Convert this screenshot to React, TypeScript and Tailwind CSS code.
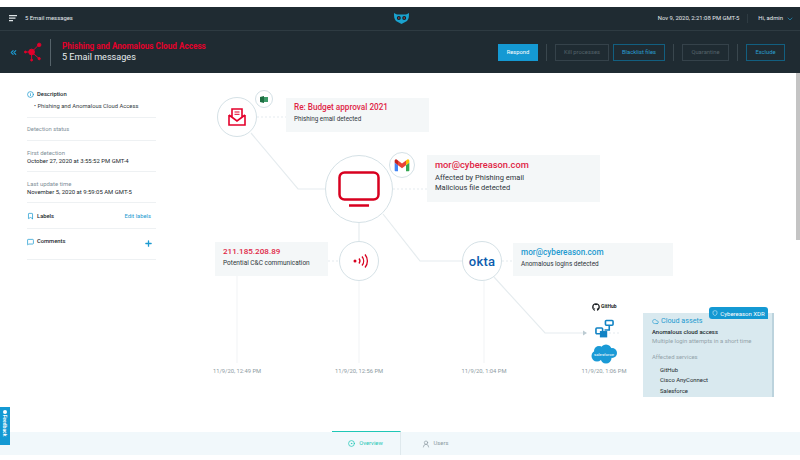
import { ChevronDown, ChevronsLeft, Cloud, Info, Plus, Shield, Bookmark, MessageSquare, UserRound, CircleDot } from "lucide-react";
import { FaGithub } from "react-icons/fa";

const Node = ({ x, y, r, children }: { x: number; y: number; r: number; children?: React.ReactNode }) => (
  <div
    className="absolute flex items-center justify-center rounded-full border-[1.5px] border-[#d5e1e6] bg-white"
    style={{ left: x - r, top: y - r, width: r * 2, height: r * 2 }}
  >
    {children}
  </div>
);

const Time = ({ x, label }: { x: number; label: string }) => (
  <span className="absolute top-[294px] w-[80px] -translate-x-1/2 text-center text-[5.8px] text-[#8c9aa1]" style={{ left: x }}>
    {label}
  </span>
);

const SideRow = ({ label, value }: { label: string; value: string }) => (
  <div className="h-[31px] border-b border-[#eef1f3] pt-[8px] text-[5.95px] leading-[8px]">
    <div className="text-[#7f9099]">{label}</div>
    <div className="text-[#22292e]">{value}</div>
  </div>
);

const Gmail = () => (
  <svg width="16" height="13" viewBox="0 0 24 19">
    <path d="M1 18V5l5 4v9H2a1 1 0 0 1-1-1z" fill="#4285f4" />
    <path d="M23 18V5l-5 4v9h4a1 1 0 0 0 1-1z" fill="#34a853" />
    <path d="M18 9V2l2-1.500a2 2 0 0 1 3 1.500v3z" fill="#fbbc04" />
    <path d="M6 9V2L4 .5a2 2 0 0 0-3 1.500v3z" fill="#c5221f" />
    <path d="M6 9V2l6 4.500L18 2v7l-6 4.500z" fill="#ea4335" />
  </svg>
);

export default function App() {
  return (
    <div className="flex h-[460px] w-[800px] flex-col overflow-hidden bg-white pt-[7px] font-['Roboto',sans-serif]">
      <header className="flex h-[24px] items-center border-b border-[#2e3b42] bg-[#1f2b32] pl-[9px] pr-[6px] text-[5.9px] text-[#e4e9ec]">
        <svg width="8" height="7" viewBox="0 0 8 7" fill="#dfe5e8">
          <path d="M0 0h8v1.300H0zM0 2.500h6.500v1.300H0zM0 5h4v1.300H0z" />
        </svg>
        <span className="ml-[8px]">5 Email messages</span>
        <svg className="ml-[321px]" width="15" height="11" viewBox="0 0 15 11">
          <path d="M0 0c2 1 3 1.500 4 1.500h7c1 0 2-.5 4-1.500 0 3 0 6-2 8l-5.500 3L2 8C0 6 0 3 0 0z" fill="#1aa3cf" />
          <circle cx="4.800" cy="5" r="2" fill="#12222c" />
          <circle cx="10.200" cy="5" r="2" fill="#12222c" />
          <circle cx="4.800" cy="5" r=".8" fill="#c9473f" />
          <circle cx="10.200" cy="5" r=".8" fill="#c9473f" />
        </svg>
        <span className="ml-auto">Nov 9, 2020, 2:21:08 PM GMT-5</span>
        <span className="ml-[8px] border-l border-[#2e3b42] pl-[10px]">Hi, admin</span>
        <ChevronDown className="ml-[3px] h-[8px] w-[8px] text-[#1d9ad0]" />
      </header>

      <div className="flex h-[42px] items-center bg-[#1f2b32] pl-[9px] pr-[15px]">
        <ChevronsLeft className="h-[9px] w-[9px] text-[#1d9ad0]" strokeWidth={3} />
        <svg className="ml-[6px]" width="19" height="20" viewBox="0 0 20 20" stroke="#e4002b" fill="#e4002b" strokeWidth="1">
          <path d="M8 10 1 10M8 10 15 3M8 10 8 19M8 10 16 17" />
          <circle cx="8" cy="10" r="3" />
          <circle cx="1.500" cy="10" r="1" />
          <circle cx="16" cy="2.500" r="1.800" />
          <circle cx="8" cy="18.500" r="1" />
          <circle cx="16" cy="17" r="1.200" />
        </svg>
        <div className="ml-[7px] h-[27px] w-px bg-[#56636a]" />
        <div className="ml-[11px] leading-[11px]">
          <div className="text-[8.2px] font-bold text-[#e4002b]">Phishing and Anomalous Cloud Access</div>
          <div className="text-[9.1px] text-[#e8ecee]">5 Email messages</div>
        </div>
        <div className="ml-auto flex items-center text-[5.8px]">
          <button className="flex h-[17px] w-[40px] items-center justify-center bg-[#1499d3] text-white">Respond</button>
          <div className="mx-[8px] h-[17px] w-px bg-[#3a474e]" />
          <button className="flex h-[17px] w-[54px] items-center justify-center border border-[#35424a] text-[#55636a]">Kill processes</button>
          <button className="ml-[4px] flex h-[17px] w-[52px] items-center justify-center border border-[#125f80] text-[#2a9fd0]">Blacklist files</button>
          <div className="mx-[8px] h-[17px] w-px bg-[#3a474e]" />
          <button className="flex h-[17px] w-[47px] items-center justify-center border border-[#35424a] text-[#55636a]">Quarantine</button>
          <div className="mx-[8px] h-[17px] w-px bg-[#3a474e]" />
          <button className="flex h-[17px] w-[39px] items-center justify-center border border-[#125f80] text-[#2a9fd0]">Exclude</button>
        </div>
      </div>

      <div className="relative flex h-[359px]">
        <aside className="ml-[27px] w-[129px] shrink-0 pt-[17px] text-[5.8px]">
          <div className="border-b border-[#eef1f3] pb-[7px]">
            <div className="flex items-center gap-[3px] font-medium text-[#22292e]">
              <Info className="h-[7px] w-[7px] text-[#1d9ad0]" strokeWidth={2.5} />
              Description
            </div>
            <div className="mt-[3px] pl-[7px] text-[#333b40]">• Phishing and Anomalous Cloud Access</div>
          </div>
          <div className="h-[23px] border-b border-[#eef1f3] pt-[7px] text-[#7f9099]">Detection status</div>
          <SideRow label="First detection" value="October 27, 2020 at 3:55:52 PM GMT-4" />
          <SideRow label="Last update time" value="November 5, 2020 at 9:59:05 AM GMT-5" />
          <div className="flex h-[26px] items-center justify-between border-b border-[#eef1f3]">
            <span className="flex items-center gap-[3px] font-medium text-[#22292e]">
              <Bookmark className="h-[8px] w-[7px] text-[#1d9ad0]" strokeWidth={2.5} />
              Labels
            </span>
            <span className="pr-[5px] text-[#1d9ad0]">Edit labels</span>
          </div>
          <div className="flex h-[31px] items-start justify-between border-b border-[#eef1f3] pt-[8px]">
            <span className="flex items-center gap-[3px] font-medium text-[#22292e]">
              <MessageSquare className="h-[8px] w-[7px] text-[#1d9ad0]" strokeWidth={2.5} />
              Comments
            </span>
            <Plus className="mr-[3px] mt-[2px] h-[9px] w-[9px] text-[#1d9ad0]" strokeWidth={3.5} />
          </div>
        </aside>

        {/* diagram canvas: page coords minus (200, 73) */}
        <div className="absolute left-[200px] top-0 h-[359px] w-[600px]">
          <svg className="absolute left-0 top-0" width="600" height="359" fill="none" stroke="#e6ecef" strokeWidth="1.2">
            <path d="M51 60 98 116H130" />
            <path d="M159 150V170" />
            <path d="M183 141 220 188H262" />
            <path d="M294 204 345 260H385" />
            <path d="M37 203V290M159 208V290M284 208V290" stroke="#f4f6f7" />
            <path d="M57 44H86M128 188H139M193 116H227M302 188H313M405 260H420" strokeDasharray="2 2" />
            <path d="M132 113.500l4 2.500-4 2.500zM151 185.500l4 2.500-4 2.500zM383 257.500l4 2.500-4 2.500z" fill="#bccbd2" stroke="none" />
          </svg>

          <Node x={37} y={44} r={20}>
            <svg width="18" height="18" viewBox="0 0 18 18" fill="none" stroke="#e4002b" strokeWidth="1.600">
              <path d="M1 7v10h16V7M4 9V1h10v8M1 7l8 6 8-6" />
              <path d="M6.500 4h5M6.500 6.300h5" strokeWidth="1" />
            </svg>
          </Node>
          <Node x={64} y={26} r={9}>
            <svg width="8" height="7" viewBox="0 0 8 7">
              <path d="M0 1 4 0v7L0 6z" fill="#1d6f42" />
              <path d="M4 1h4v5H4z" fill="#3c9a68" />
            </svg>
          </Node>
          <div className="absolute left-[86px] top-[25px] h-[34px] w-[143px] bg-[#f4f7f8] pl-[8px] pt-[3px] leading-[10px]">
            <div className="mt-[1px] text-[8.2px] font-medium text-[#e01f45]">Re: Budget approval 2021</div>
            <div className="mt-[2px] text-[6.3px] text-[#2e363b]">Phishing email detected</div>
          </div>

          <Node x={159} y={116} r={34}>
            <svg width="42" height="36" viewBox="0 0 42 36" fill="none" stroke="#d8001f" strokeWidth="2.500">
              <rect x="1.500" y="1.500" width="39" height="27" rx="5" />
              <path d="M11 34.500h20" />
            </svg>
          </Node>
          <Node x={202} y={92} r={13}>
            <Gmail />
          </Node>
          <div className="absolute left-[227px] top-[82px] h-[47px] w-[173px] bg-[#f4f7f8] pl-[8px] pt-[4px] leading-[10px]">
            <div className="text-[9.300px] font-medium leading-[11px] text-[#e01f45]">mor@cybereason.com</div>
            <div className="mt-[3px] text-[7.500px] text-[#2e363b]">Affected by Phishing email</div>
            <div className="text-[7.500px] text-[#2e363b]">Malicious file detected</div>
          </div>

          <div className="absolute left-[15px] top-[169px] h-[34px] w-[113px] bg-[#f4f7f8] pl-[8px] pt-[3px] leading-[10px]">
            <div className="mt-[1px] text-[8.100px] font-medium text-[#e01f45]">211.185.208.89</div>
            <div className="mt-[2px] text-[6.500px] text-[#2e363b]">Potential C&amp;C communication</div>
          </div>
          <Node x={159} y={188} r={20}>
            <svg className="ml-[4px]" width="16" height="16" viewBox="0 0 16 16" fill="none" stroke="#d8001f" strokeWidth="1.300">
              <circle cx="2" cy="8" r="1.500" fill="#d8001f" stroke="none" />
              <path d="M6 5.500a4 4 0 0 1 0 5M9 3.500a7 7 0 0 1 0 9M12 1.500a10 10 0 0 1 0 13" />
            </svg>
          </Node>

          <Node x={282} y={188} r={20}>
            <span className="text-[13px] font-medium leading-none tracking-[0.2px] text-[#0b5cad]">okta</span>
          </Node>
          <div className="absolute left-[313px] top-[170px] h-[33px] w-[160px] bg-[#f4f7f8] pl-[8px] pt-[3px] leading-[10px]">
            <div className="mt-[1px] text-[8.200px] font-medium text-[#1d9ad0]">mor@cybereason.com</div>
            <div className="mt-[2px] text-[6.400px] text-[#2e363b]">Anomalous logins detected</div>
          </div>

          {/* cloud cluster */}
          <div className="absolute left-[392px] top-[230px] flex items-center gap-[1px] text-[5px] font-bold text-[#1b1f23]">
            <FaGithub className="h-[8px] w-[8px]" />
            GitHub
          </div>
          <svg className="absolute left-[395px] top-[246px]" width="19" height="20" viewBox="0 0 20 20" fill="none" stroke="#1283c4" strokeWidth="1.700">
            <rect x="11" y="1" width="8" height="5" rx="1" />
            <path d="M15 6v5H10" />
            <rect x="1" y="9" width="7" height="6" rx="1" />
            <rect x="6" y="13" width="6" height="5" fill="#1283c4" />
          </svg>
          <svg className="absolute left-[391px] top-[271px]" width="26" height="20" viewBox="0 0 26 20">
            <g fill="#1a9ad6">
              <circle cx="8" cy="7" r="5" />
              <circle cx="15" cy="6" r="5.500" />
              <circle cx="21" cy="9" r="5" />
              <circle cx="6" cy="12" r="5.500" />
              <circle cx="15" cy="14" r="5.500" />
            </g>
            <text x="13" y="11.500" textAnchor="middle" fontSize="4.300" fill="#fff">salesforce</text>
          </svg>
          <Time x={37} label="11/9/20, 12:49 PM" />
          <Time x={159} label="11/9/20, 12:56 PM" />
          <Time x={284} label="11/9/20, 1:04 PM" />
          <Time x={404} label="11/9/20, 1:06 PM" />

          <div className="absolute left-[443px] top-[240px] h-[84px] w-[131px] border-r-2 border-[#bcd3dd] bg-[#d9e9ef] pl-[9px] pt-[3px]">
            <div className="flex items-center gap-[2px] text-[7.200px] text-[#1d9ad0]">
              <Cloud className="h-[7px] w-[7px]" />
              Cloud assets
            </div>
            <div className="mt-[1px] text-[5.900px] font-medium leading-[9px] text-[#22292e]">Anomalous cloud access</div>
            <div className="text-[5.900px] leading-[9px] text-[#93a3aa]">Multiple login attempts in a short time</div>
            <div className="mt-[7px] text-[5.900px] leading-[9px] text-[#93a3aa]">Affected services</div>
            <div className="mt-[3px] pl-[8px] text-[5.900px] leading-[10.500px] text-[#22292e]">
              <div>GitHub</div>
              <div>Cisco AnyConnect</div>
              <div>Salesforce</div>
            </div>
          </div>
          <div className="absolute left-[509px] top-[234px] flex h-[12px] w-[59px] items-center justify-center gap-[2px] rounded-t-[3px] rounded-bl-[3px] bg-[#1499d3] text-[6px] text-white">
            <Shield className="h-[6px] w-[6px]" />
            Cybereason XDR
          </div>
        </div>

        <div className="absolute right-0 top-0 h-[167px] w-[4px] bg-[#c4c4c4]" />
      </div>

      <nav className="flex h-[23px] items-stretch justify-center bg-[#f1f8fb] pl-px text-[5.800px]">
        <div className="-mt-px flex w-[69px] items-center justify-center gap-[4px] border-r border-t-[1.5px] border-t-[#1fc7b6] border-r-[#dfe9ed] text-[#1fc7b6]">
          <CircleDot className="h-[7px] w-[7px]" strokeWidth={2.5} />
          Overview
        </div>
        <div className="flex w-[69px] items-center justify-center gap-[4px] text-[#8c9aa1]">
          <UserRound className="h-[8px] w-[8px]" />
          Users
        </div>
      </nav>

      <div className="absolute left-0 top-[407px] flex h-[38px] w-[10px] flex-col items-center gap-[9px] bg-[#1499d3] pt-[3px]">
        <span className="h-[4px] w-[4px] rounded-full bg-white" />
        <span className="rotate-90 whitespace-nowrap text-[5px] font-bold leading-none text-white">Feedback</span>
      </div>
    </div>
  );
}
